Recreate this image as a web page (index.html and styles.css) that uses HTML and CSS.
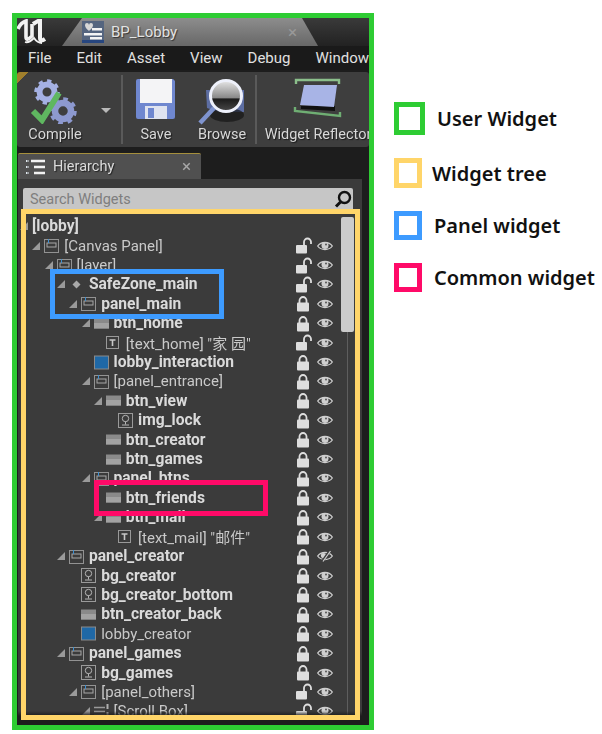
FILE: index.html
```html
<!DOCTYPE html>
<html lang="en">
<head>
    <meta charset="UTF-8">
    <meta name="viewport" content="width=device-width, initial-scale=1.0">
    <title>BP_Lobby hierarchy</title>
    <link rel="stylesheet" href="styles.css">
</head>
<body>
    <!-- tree icons -->
    <svg class="sprite" xmlns="http://www.w3.org/2000/svg">
        <symbol id="i-arrow" viewBox="0 0 10 10"><path d="M9 1V9H1Z" fill="#9a9a9a"/></symbol>
        <symbol id="i-panel" viewBox="0 0 15 15"><rect x=".5" y="1.5" width="14" height="13" fill="none" stroke="#929292"/><rect x="3" y="5" width="9" height="4" fill="none" stroke="#a8a8a8"/><path d="M4.5 1V5" stroke="#3f8fd0"/></symbol>
        <symbol id="i-button" viewBox="0 0 15 15"><rect y="2.5" width="15" height="10" fill="#8a8a8a"/><rect y="7" width="15" height="5.5" fill="#a2a2a2"/></symbol>
        <symbol id="i-blue" viewBox="0 0 15 15"><rect x=".5" y="1" width="14" height="13" fill="#1f68a6" stroke="#8a8a8a"/></symbol>
        <symbol id="i-text" viewBox="0 0 15 15"><rect x=".5" y="1.5" width="12" height="12" fill="none" stroke="#999"/><path d="M3.5 5H9.5M6.5 5V11" fill="none" stroke="#c8c8c8" stroke-width="1.6"/></symbol>
        <symbol id="i-image" viewBox="0 0 15 15"><rect x=".5" y=".5" width="14" height="14" fill="none" stroke="#9a9a9a"/><circle cx="7.5" cy="5.5" r="3.2" fill="none" stroke="#b5b5b5"/><path d="M7.5 8.5V11.5M4 12H11" stroke="#b5b5b5"/></symbol>
        <symbol id="i-diamond" viewBox="0 0 15 15"><path d="M7.5 3.5L11.5 7.5L7.5 11.5L3.5 7.5Z" fill="#a8a8a8"/></symbol>
        <symbol id="i-scroll" viewBox="0 0 15 15"><path d="M0 3.5H11M0 7.5H11M0 11.5H11" stroke="#9a9a9a" stroke-width="1.5"/><path d="M13.5 0V5M13.5 8V14" stroke="#b0b0b0" stroke-width="2"/></symbol>
        <symbol id="i-lock" viewBox="0 0 16 17"><path d="M3.5 8V5.5a3.5 3.5 0 0 1 7 0V8" fill="none" stroke="#dedede" stroke-width="1.8"/><rect x="1" y="7.5" width="12" height="9" rx="1" fill="#dedede"/></symbol>
        <symbol id="i-unlock" viewBox="0 0 16 17"><path d="M8 8V5a3.5 3.5 0 0 1 7 0V7" fill="none" stroke="#dedede" stroke-width="1.8"/><rect x="0" y="8" width="11" height="8.5" rx="1" fill="#dedede"/></symbol>
        <symbol id="i-eye" viewBox="0 0 16 12"><path d="M.7 6C4 1.3 12 1.3 15.3 6C12 10.7 4 10.7 .7 6Z" fill="none" stroke="#cfcfcf" stroke-width="1.3"/><circle cx="8" cy="5.4" r="3.5" fill="#cfcfcf"/><circle cx="9" cy="4.4" r="1" fill="#555"/></symbol>
        <symbol id="i-eye-off" viewBox="0 0 16 12"><path d="M.7 6C4 1.3 12 1.3 15.3 6C12 10.7 4 10.7 .7 6Z" fill="none" stroke="#cfcfcf" stroke-width="1.3"/><circle cx="6.5" cy="5.6" r="2.6" fill="#cfcfcf"/><path d="M5 12L13 .5" stroke="#3c3c3c" stroke-width="2.6"/><path d="M6 11.5L13.5 1" stroke="#cfcfcf" stroke-width="1.2"/></symbol>
    </svg>

    <div class="app">
        <div class="shot">
            <div class="titlebar">
                <svg class="ue-logo" viewBox="0 0 30 26" width="30" height="26">
                    <path d="M1 10C3 5 6 3 9 2V18C9 21 11 21 15 17V5" fill="none" stroke="#f2f2f2" stroke-width="3.6"/>
                    <path d="M16 5C19 3 21 2 23 1V19C23 22 25 22 28 20" fill="none" stroke="#f2f2f2" stroke-width="4"/>
                    <path d="M8 23C11 24 14 22 17 19C19 22 21 24 25 24" fill="none" stroke="#f2f2f2" stroke-width="1.8"/>
                </svg>
                <div class="doc-tab">
                    <svg class="doc-icon" viewBox="0 0 22 22" width="22" height="22">
                        <rect width="22" height="22" fill="#55657f"/>
                        <rect y="19" width="22" height="3" fill="#27467f"/>
                        <path d="M3 4a2 2 0 0 1 4 0a2 2 0 0 1 4 0C11 7 8 9 7 10C6 9 3 7 3 4Z" fill="#d8d8d8"/>
                        <rect x="2" y="12" width="18" height="2.5" fill="#f4f4f4"/>
                        <rect x="10" y="7" width="10" height="2.5" fill="#f4f4f4"/>
                        <rect x="8" y="16" width="12" height="2.5" fill="#f4f4f4"/>
                    </svg>
                    <span class="doc-title">BP_Lobby</span>
                    <span class="close doc-close">×</span>
                </div>
            </div>

            <nav class="menubar">
                <span>File</span><span>Edit</span><span>Asset</span><span>View</span><span>Debug</span><span>Window</span>
            </nav>

            <div class="toolbar">
                <div class="tool tool-compile">
                    <svg viewBox="0 0 50 46" width="50" height="46">
                        <circle cx="17" cy="14" r="7.5" fill="none" stroke="#a5b1e4" stroke-width="6"/>
                        <circle cx="17" cy="14" r="11" fill="none" stroke="#a5b1e4" stroke-width="3.5" stroke-dasharray="4.2 4.4"/>
                        <circle cx="33" cy="33" r="8" fill="none" stroke="#8d99cf" stroke-width="6.5"/>
                        <circle cx="33" cy="33" r="12" fill="none" stroke="#8d99cf" stroke-width="3.5" stroke-dasharray="4.6 4.8"/>
                        <path d="M3 33L12 42L29 15" fill="none" stroke="#5fb760" stroke-width="6"/>
                    </svg>
                    <span>Compile</span>
                </div>
                <div class="dropdown"></div>
                <div class="tool-sep"></div>
                <div class="tool tool-save">
                    <svg viewBox="0 0 42 44" width="42" height="44">
                        <path d="M3 5H39V41H3Z" fill="#1c1c1c" opacity=".5"/>
                        <path d="M1 3Q1 1 3 1H38L40 3V39Q40 41 38 41H3Q1 41 1 39Z" fill="#6f87cf"/>
                        <rect x="5" y="1" width="32" height="24" fill="#f4f4f6"/>
                        <rect x="10" y="28" width="22" height="13" fill="#dfe3f0"/>
                        <rect x="13" y="30" width="6" height="10" fill="#6f87cf"/>
                    </svg>
                    <span>Save</span>
                </div>
                <div class="tool tool-browse">
                    <svg viewBox="0 0 50 48" width="50" height="48">
                        <defs>
                            <linearGradient id="lens" x1="0" y1="0" x2="0" y2="1">
                                <stop offset="0" stop-color="#e8e8e8"/>
                                <stop offset=".55" stop-color="#8a8a8a"/>
                                <stop offset=".6" stop-color="#1c1c1c"/>
                                <stop offset="1" stop-color="#4a4a4a"/>
                            </linearGradient>
                        </defs>
                        <path d="M9 12H47V34H22L10 30Z" fill="#5d6ea3"/>
                        <ellipse cx="30" cy="37" rx="17" ry="7" fill="#151515" opacity=".7"/>
                        <path d="M17 30L3 45" stroke="#7f94cf" stroke-width="4.5"/>
                        <circle cx="29" cy="18" r="15.5" fill="url(#lens)" stroke="#eef1fb" stroke-width="3"/>
                    </svg>
                    <span>Browse</span>
                </div>
                <div class="tool-sep"></div>
                <div class="tool tool-reflector">
                    <svg viewBox="0 0 50 40" width="50" height="40">
                        <path d="M3 6V2H46V6" fill="none" stroke="#8bbf8b" stroke-width="2.4"/>
                        <path d="M2 29V33L47 38V34" fill="none" stroke="#6fae73" stroke-width="2.4"/>
                        <path d="M8 31L42 33V28H8Z" fill="#111"/>
                        <path d="M11 7H44L41 29L7 27Z" fill="#a8b4e6"/>
                    </svg>
                    <span>Widget Reflector</span>
                </div>
            </div>

            <div class="dock">
                <div class="dock-tab">
                    <svg viewBox="0 0 20 16" width="20" height="16">
                        <path d="M0 2H3M0 8H3M0 14H3" stroke="#dfe7ee" stroke-width="2" stroke-dasharray="1.5 1"/>
                        <path d="M5 2H19M8 8H19M8 14H19" stroke="#f2f2f2" stroke-width="2.4"/>
                    </svg>
                    <span class="dock-title">Hierarchy</span>
                    <span class="close dock-close">×</span>
                </div>
                <div class="panel">
                    <div class="search">
                        <span>Search Widgets</span>
                        <svg viewBox="0 0 18 18" width="18" height="18">
                            <circle cx="10.5" cy="7.5" r="5.5" fill="none" stroke="#111" stroke-width="2.4"/>
                            <path d="M6.5 12L2 16.5" stroke="#111" stroke-width="3"/>
                        </svg>
                    </div>
                    <div class="tree-wrap">
                        <div class="tree">
                            <div class="row lv0 bold"><svg class="arrow"><use href="#i-arrow"/></svg><span>[lobby]</span></div>

                            <div class="row lv1"><svg class="arrow"><use href="#i-arrow"/></svg><svg class="ico"><use href="#i-panel"/></svg><span>[Canvas Panel]</span><svg class="lock"><use href="#i-unlock"/></svg><svg class="eye"><use href="#i-eye"/></svg></div>
                            <div class="row lv2"><svg class="arrow"><use href="#i-arrow"/></svg><svg class="ico"><use href="#i-panel"/></svg><span>[layer]</span><svg class="lock"><use href="#i-unlock"/></svg><svg class="eye"><use href="#i-eye"/></svg></div>
                            <div class="row lv3 bold"><svg class="arrow"><use href="#i-arrow"/></svg><svg class="ico"><use href="#i-diamond"/></svg><span>SafeZone_main</span><svg class="lock"><use href="#i-unlock"/></svg><svg class="eye"><use href="#i-eye"/></svg></div>
                            <div class="row lv4 bold"><svg class="arrow"><use href="#i-arrow"/></svg><svg class="ico"><use href="#i-panel"/></svg><span>panel_main</span><svg class="lock"><use href="#i-lock"/></svg><svg class="eye"><use href="#i-eye"/></svg></div>
                            <div class="row lv5 bold"><svg class="arrow"><use href="#i-arrow"/></svg><svg class="ico"><use href="#i-button"/></svg><span>btn_home</span><svg class="lock"><use href="#i-lock"/></svg><svg class="eye"><use href="#i-eye"/></svg></div>
                            <div class="row lv6"><span class="arrow"></span><svg class="ico"><use href="#i-text"/></svg><span>[text_home] "家 园"</span><svg class="lock"><use href="#i-unlock"/></svg><svg class="eye"><use href="#i-eye"/></svg></div>
                            <div class="row lv5 bold"><span class="arrow"></span><svg class="ico"><use href="#i-blue"/></svg><span>lobby_interaction</span><svg class="lock"><use href="#i-lock"/></svg><svg class="eye"><use href="#i-eye"/></svg></div>
                            <div class="row lv5"><svg class="arrow"><use href="#i-arrow"/></svg><svg class="ico"><use href="#i-panel"/></svg><span>[panel_entrance]</span><svg class="lock"><use href="#i-lock"/></svg><svg class="eye"><use href="#i-eye"/></svg></div>
                            <div class="row lv6 bold"><svg class="arrow"><use href="#i-arrow"/></svg><svg class="ico"><use href="#i-button"/></svg><span>btn_view</span><svg class="lock"><use href="#i-lock"/></svg><svg class="eye"><use href="#i-eye"/></svg></div>
                            <div class="row lv7 bold"><span class="arrow"></span><svg class="ico"><use href="#i-image"/></svg><span>img_lock</span><svg class="lock"><use href="#i-lock"/></svg><svg class="eye"><use href="#i-eye"/></svg></div>
                            <div class="row lv6 bold"><span class="arrow"></span><svg class="ico"><use href="#i-button"/></svg><span>btn_creator</span><svg class="lock"><use href="#i-lock"/></svg><svg class="eye"><use href="#i-eye"/></svg></div>
                            <div class="row lv6 bold"><span class="arrow"></span><svg class="ico"><use href="#i-button"/></svg><span>btn_games</span><svg class="lock"><use href="#i-lock"/></svg><svg class="eye"><use href="#i-eye"/></svg></div>
                            <div class="row lv5 bold"><svg class="arrow"><use href="#i-arrow"/></svg><svg class="ico"><use href="#i-panel"/></svg><span>panel_btns</span><svg class="lock"><use href="#i-lock"/></svg><svg class="eye"><use href="#i-eye"/></svg></div>
                            <div class="row lv6 bold"><span class="arrow"></span><svg class="ico"><use href="#i-button"/></svg><span>btn_friends</span><svg class="lock"><use href="#i-lock"/></svg><svg class="eye"><use href="#i-eye"/></svg></div>
                            <div class="row lv6 bold"><svg class="arrow"><use href="#i-arrow"/></svg><svg class="ico"><use href="#i-button"/></svg><span>btn_mail</span><svg class="lock"><use href="#i-lock"/></svg><svg class="eye"><use href="#i-eye"/></svg></div>
                            <div class="row lv7"><span class="arrow"></span><svg class="ico"><use href="#i-text"/></svg><span>[text_mail] "邮件"</span><svg class="lock"><use href="#i-lock"/></svg><svg class="eye"><use href="#i-eye"/></svg></div>
                            <div class="row lv3 bold"><svg class="arrow"><use href="#i-arrow"/></svg><svg class="ico"><use href="#i-panel"/></svg><span>panel_creator</span><svg class="lock"><use href="#i-lock"/></svg><svg class="eye"><use href="#i-eye-off"/></svg></div>
                            <div class="row lv4 bold"><span class="arrow"></span><svg class="ico"><use href="#i-image"/></svg><span>bg_creator</span><svg class="lock"><use href="#i-lock"/></svg><svg class="eye"><use href="#i-eye"/></svg></div>
                            <div class="row lv4 bold"><span class="arrow"></span><svg class="ico"><use href="#i-image"/></svg><span>bg_creator_bottom</span><svg class="lock"><use href="#i-lock"/></svg><svg class="eye"><use href="#i-eye"/></svg></div>
                            <div class="row lv4 bold"><span class="arrow"></span><svg class="ico"><use href="#i-button"/></svg><span>btn_creator_back</span><svg class="lock"><use href="#i-lock"/></svg><svg class="eye"><use href="#i-eye"/></svg></div>
                            <div class="row lv4"><span class="arrow"></span><svg class="ico"><use href="#i-blue"/></svg><span>lobby_creator</span><svg class="lock"><use href="#i-lock"/></svg><svg class="eye"><use href="#i-eye"/></svg></div>
                            <div class="row lv3 bold"><svg class="arrow"><use href="#i-arrow"/></svg><svg class="ico"><use href="#i-panel"/></svg><span>panel_games</span><svg class="lock"><use href="#i-lock"/></svg><svg class="eye"><use href="#i-eye"/></svg></div>
                            <div class="row lv4 bold"><span class="arrow"></span><svg class="ico"><use href="#i-image"/></svg><span>bg_games</span><svg class="lock"><use href="#i-lock"/></svg><svg class="eye"><use href="#i-eye"/></svg></div>
                            <div class="row lv4"><svg class="arrow"><use href="#i-arrow"/></svg><svg class="ico"><use href="#i-panel"/></svg><span>[panel_others]</span><svg class="lock"><use href="#i-unlock"/></svg><svg class="eye"><use href="#i-eye"/></svg></div>
                            <div class="row lv5"><svg class="arrow"><use href="#i-arrow"/></svg><svg class="ico"><use href="#i-scroll"/></svg><span>[Scroll Box]</span><svg class="lock"><use href="#i-unlock"/></svg><svg class="eye"><use href="#i-eye"/></svg></div>
                        </div>
                        <div class="scrollbar"><div class="thumb"></div></div>
                    </div>
                </div>
            </div>
        </div>

        <!-- annotation frames drawn over the editor -->
        <div class="mark mark-tree"></div>
        <div class="mark mark-panel"></div>
        <div class="mark mark-common"></div>
    </div>

    <aside class="legend">
        <div class="legend-row row-user"><span class="swatch swatch-green"></span><span>User Widget</span></div>
        <div class="legend-row row-tree"><span class="swatch swatch-yellow"></span><span>Widget tree</span></div>
        <div class="legend-row row-panel"><span class="swatch swatch-blue"></span><span>Panel widget</span></div>
        <div class="legend-row row-common"><span class="swatch swatch-pink"></span><span>Common widget</span></div>
    </aside>
</body>
</html>
```
FILE: styles.css
```css
* {
    box-sizing: border-box;
}

body {
    font-family: Roboto, "Noto Sans CJK SC", sans-serif;
    margin: 0;
    padding: 13px 12px 0;
    background-color: #fff;
    display: flex;
    align-items: flex-start;
    overflow: hidden;
}

.sprite {
    display: none;
}

/* editor window */
.app {
    position: relative;
    width: 362px;
    height: 717px;
    border: 5px solid #2ecc33;
    background-color: #1d1d1d;
    flex-shrink: 0;
}

.shot {
    height: 100%;
    overflow: hidden;
    filter: blur(0.35px);
}

.titlebar {
    display: flex;
    align-items: flex-end;
    height: 28px;
    background: linear-gradient(#3a3a3a, #222);
}

.ue-logo {
    flex-shrink: 0;
    margin-bottom: 1px;
}

.doc-tab {
    display: flex;
    align-items: center;
    width: 256px;
    height: 28px;
    margin-left: 15px;
    padding-left: 20px;
    background: linear-gradient(#8d8d8d, #676767);
    clip-path: polygon(20px 0, 240px 0, 256px 100%, 0 100%);
}

.doc-icon {
    flex-shrink: 0;
}

.doc-title {
    margin-left: 7px;
    font-size: 15px;
    color: #e2e2e2;
    text-shadow: 1px 1px 1px #333;
}

.close {
    font-size: 17px;
    color: #a8a8a8;
    line-height: 1;
}

.doc-close {
    margin-left: auto;
    margin-right: 21px;
    color: #999;
}

.menubar {
    display: flex;
    align-items: center;
    gap: 25px;
    height: 24px;
    padding-left: 11px;
    background-color: #1a1a1a;
    color: #e0e0e0;
    font-size: 15px;
    white-space: nowrap;
    overflow: hidden;
}

.toolbar {
    display: flex;
    align-items: stretch;
    height: 75px;
    margin-top: 2px;
    background-color: #3e3e3e;
    background-image: linear-gradient(135deg, #a07f2c 8px, transparent 8px);
    border-radius: 3px;
    color: #d8d8d8;
    font-size: 14.5px;
    overflow: hidden;
}

.tool {
    display: flex;
    flex-direction: column;
    align-items: center;
    justify-content: flex-end;
    padding-bottom: 4px;
    text-shadow: 1px 1px 1px #1a1a1a;
    white-space: nowrap;
    flex-shrink: 0;
}

.tool svg {
    margin-bottom: auto;
    margin-top: 6px;
}

.tool-compile {
    width: 76px;
}

.dropdown {
    width: 0;
    height: 0;
    margin: 36px 10px 0 8px;
    border-left: 5px solid transparent;
    border-right: 5px solid transparent;
    border-top: 5px solid #b9b9b9;
}

.tool-sep {
    width: 2px;
    margin: 3px 0;
    background-color: #5a5a5a;
    flex-shrink: 0;
}

.tool-save {
    width: 66px;
}

.tool-browse {
    width: 66px;
}

.tool-reflector {
    width: 122px;
}

.dock {
    margin-top: 6px;
    padding-left: 1px;
}

.dock-tab {
    display: flex;
    align-items: center;
    width: 183px;
    height: 26px;
    padding: 0 10px 0 8px;
    background-color: #505050;
    border-top: 1px solid #a58f3c;
    border-radius: 2px 2px 0 0;
}

.dock-title {
    margin-left: 7px;
    font-size: 14.5px;
    color: #dcdcdc;
    text-shadow: 1px 1px 1px #222;
}

.dock-close {
    margin-left: auto;
}

.panel {
    position: relative;
    width: 344px;
    height: 537px;
    padding-top: 9px;
    background-color: #3b3b3b;
    overflow: hidden;
}

/* dark fade where the list runs under the panel edge */
.panel::after {
    content: "";
    position: absolute;
    left: 0;
    right: 0;
    bottom: 0;
    height: 5px;
    background: linear-gradient(transparent, #1f1f1f);
}

.search {
    display: flex;
    align-items: center;
    justify-content: space-between;
    width: 330px;
    height: 21px;
    margin-left: 5px;
    padding: 1px 1px 0 7px;
    background-color: #c6c6c6;
    border-radius: 2px 2px 0 0;
    color: #7e7e7e;
    font-size: 14.5px;
}

/* tree */
.tree-wrap {
    display: flex;
    align-items: flex-start;
    width: 336px;
    margin-top: 7.5px;
}

.tree {
    width: 322px;
    flex-shrink: 0;
}

.row {
    display: flex;
    align-items: center;
    height: 19.42px;
    padding-right: 7px;
    font-size: 15px;
    color: #c9c9c9;
    white-space: nowrap;
}

.bold {
    font-weight: 700;
    font-size: 15.6px;
    color: #dadada;
}

.lv0 { padding-left: 1px; }
.lv1 { padding-left: 13.3px; }
.lv2 { padding-left: 25.6px; }
.lv3 { padding-left: 37.9px; }
.lv4 { padding-left: 50.2px; }
.lv5 { padding-left: 62.5px; }
.lv6 { padding-left: 74.8px; }
.lv7 { padding-left: 87.1px; }

.arrow {
    display: block;
    width: 10px;
    height: 10px;
    margin-right: 3px;
    flex-shrink: 0;
}

.ico {
    width: 15px;
    height: 15px;
    margin-right: 5px;
    flex-shrink: 0;
}

.lock {
    width: 16px;
    height: 17px;
    margin-left: auto;
    flex-shrink: 0;
}

.eye {
    width: 16px;
    height: 12px;
    margin-left: 5px;
    flex-shrink: 0;
}

.scrollbar {
    display: flex;
    justify-content: center;
    width: 13px;
    margin-left: 1px;
    height: 500px;
    background: linear-gradient(#5e5e5e, #5e5e5e) center / 1px 100% no-repeat;
}

.thumb {
    width: 13px;
    height: 115px;
    background-color: #cbcbcb;
    border-radius: 2px;
}

/* annotation frames */
.mark {
    position: absolute;
    border-style: solid;
    border-width: 5px;
}

.mark-tree {
    left: 4px;
    top: 191px;
    width: 339px;
    height: 511px;
    border-color: #ffd569;
}

.mark-panel {
    left: 33px;
    top: 251px;
    width: 174px;
    height: 50px;
    border-color: #3d9bff;
}

.mark-common {
    left: 77px;
    top: 462px;
    width: 174px;
    height: 36px;
    border-color: #ff0a68;
}

/* legend */
.legend {
    display: flex;
    flex-direction: column;
    margin-left: 20px;
    padding-top: 89px;
    font-family: "Noto Sans", sans-serif;
    font-size: 20px;
    font-weight: 600;
    color: #111;
}

.legend-row {
    display: flex;
    align-items: center;
    white-space: nowrap;
}

.swatch {
    display: block;
    width: 28px;
    height: 29px;
    border: 5px solid;
    flex-shrink: 0;
}

.swatch-green {
    width: 31px;
    height: 33px;
    border-color: #2ecc33;
}

.swatch-yellow {
    height: 30px;
    border-color: #ffd569;
}

.swatch-blue {
    border-color: #3d9bff;
}

.swatch-pink {
    border-color: #ff0a68;
}

.row-user { gap: 12px; }
.row-tree { gap: 10px; margin-top: 23px; }
.row-panel { gap: 12px; margin-top: 23px; }
.row-common { gap: 12px; margin-top: 23px; }
```
